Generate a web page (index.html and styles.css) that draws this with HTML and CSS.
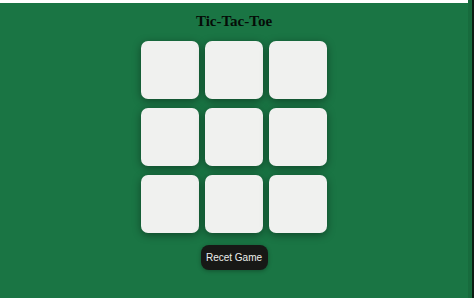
FILE: index.html
```html
<!DOCTYPE html>
<html>
<head>
<meta charset="utf-8">
<link rel="stylesheet" href="styles.css">
<title>Tic-Tac-Toe</title>
</head>
<body>
<div class="page">
  <div class="main">
    <h1 class="title">Tic-Tac-Toe</h1>
    <div class="board">
      <div class="cell"></div>
      <div class="cell"></div>
      <div class="cell"></div>
      <div class="cell"></div>
      <div class="cell"></div>
      <div class="cell"></div>
      <div class="cell"></div>
      <div class="cell"></div>
      <div class="cell"></div>
    </div>
    <button class="reset">Recet Game</button>
  </div>
  <div class="edge"></div>
</div>
</body>
</html>
```

FILE: styles.css
```css
html, body {
  margin: 0;
  padding: 0;
  background: #ffffff;
  overflow: hidden;
}
.page {
  display: flex;
  width: 474px;
  height: 298px;
}
.main {
  width: 468px;
  height: 295px;
  margin-top: 3px;
  background: #1a7544;
  display: flex;
  flex-direction: column;
  align-items: center;
}
.edge {
  flex: 1;
  background: #0c1d14;
  border-left: 4px solid #176b3d;
}
.title {
  margin: 10px 0 0;
  font-family: "Liberation Serif", "Times New Roman", serif;
  font-weight: bold;
  font-size: 15px;
  line-height: 16px;
  color: #050c07;
}
.board {
  margin-top: 12px;
  display: grid;
  grid-template-columns: repeat(3, 58px);
  grid-template-rows: repeat(3, 58px);
  column-gap: 6px;
  row-gap: 9px;
}
.cell {
  background: #f0f1ef;
  border-radius: 7px;
  box-shadow: 0 2px 8px rgba(0, 0, 0, 0.4);
}
.reset {
  margin-top: 12px;
  width: 67px;
  height: 25px;
  padding: 0;
  border: none;
  border-radius: 8px;
  background: #171816;
  color: #ecefeb;
  font-family: "Liberation Sans", Arial, sans-serif;
  font-size: 10px;
  box-shadow: 0 1px 4px rgba(0, 0, 0, 0.3);
}
```
